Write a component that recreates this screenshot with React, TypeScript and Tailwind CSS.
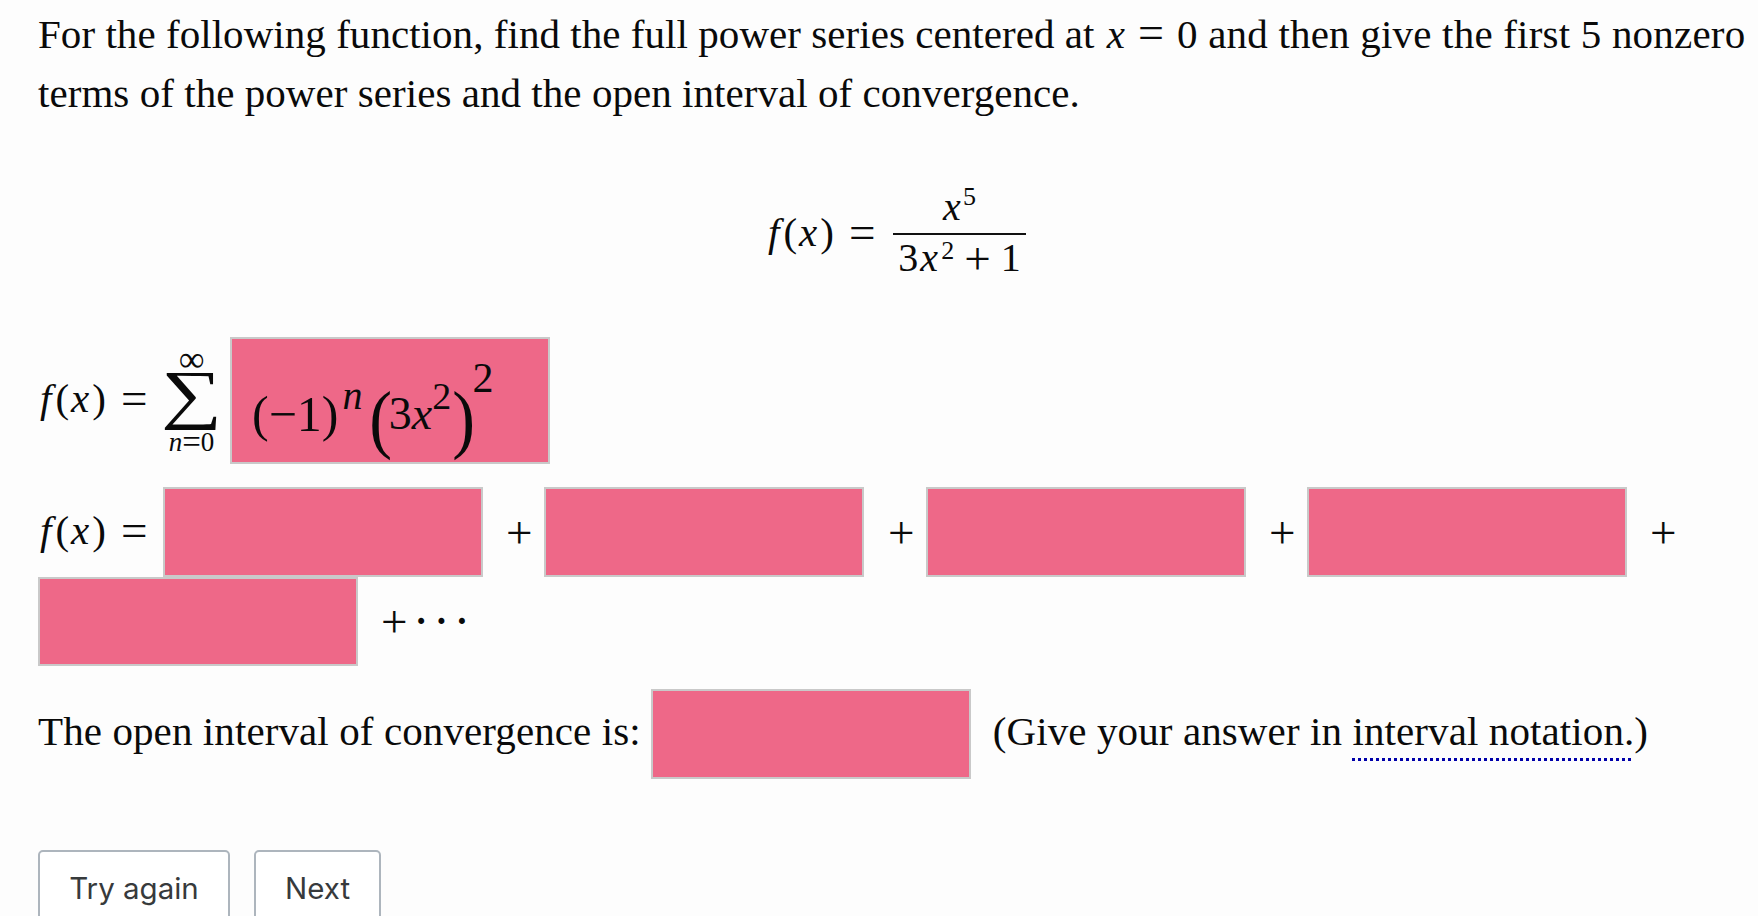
import React from "react";

const Box = ({ className = "", children }: { className?: string; children?: React.ReactNode }) => (
  <div className={`w-[320px] shrink-0 border-2 border-[#c9c9c9] bg-[#ee6888] ${className}`}>{children}</div>
);

const Fx = () => (
  <span className="inline-flex w-[111px] shrink-0 items-center pb-[4px] pl-[2px] text-[41px] leading-none">
    <i className="mr-[4px]">f</i>
    <span className="mr-[2px]">(</span>
    <i className="mr-[3px]">x</i>
    <span>)</span>
    <span className="ml-[15px] text-[47px] leading-none">=</span>
  </span>
);

const Plus = ({ className = "" }: { className?: string }) => (
  <span className={`w-[26px] shrink-0 text-center text-[47px] leading-none ${className}`}>+</span>
);

export default function App() {
  return (
    <div className="h-[916px] w-[1758px] overflow-hidden bg-[#fdfdfd] pl-[38px] pt-[5px] font-['Liberation_Serif',serif] text-[#0a0a0a]">
      <p className="w-[1716px] text-[41px] leading-[59px] tracking-[0.05px]">
        For the following function, find the full power series centered at <i className="ml-[2px]">x</i>
        <span className="mx-[13px] text-[46px] leading-none">=</span>
        <span className="tracking-[0.2px]">0 and then give the first 5 nonzero</span> terms of the power series and the
        open interval of convergence.
      </p>

      <div className="mt-[46px] flex w-[1716px] items-center justify-center">
        <Fx />
        <div className="ml-[16px] flex w-[133px] flex-col items-center">
          <div className="flex h-[64px] items-end pb-[6px] text-[40px] leading-none">
            <i>x</i>
            <span className="mb-[17px] ml-[2px] text-[26px] leading-none">5</span>
          </div>
          <div className="h-[2px] w-full bg-[#111]" />
          <div className="flex h-[64px] items-start pt-[3px] text-[40px] leading-[40px]">
            <span>3</span>
            <i className="ml-[2px]">x</i>
            <span className="-mt-[7px] ml-[3px] text-[26px] leading-[40px]">2</span>
            <span className="ml-[10px] text-[47px] leading-[40px]">+</span>
            <span className="ml-[10px]">1</span>
          </div>
        </div>
      </div>

      <div className="mt-[38px] flex items-center">
        <Fx />
        <div className="ml-[16px] flex w-[53px] flex-col items-center">
          <span className="text-[36px] leading-[20px]">∞</span>
          <span className="-mt-[2px] scale-x-[1.3] text-[66px] leading-[54px]">∑</span>
          <span className="mt-[11px] flex items-center text-[27px] leading-[20px]">
            <i>n</i>
            <span className="text-[33px] leading-[20px]">=</span>0
          </span>
        </div>
        <Box className="ml-[12px] flex h-[127px] items-center pl-[20px]">
          <div className="flex h-[100px] items-center whitespace-nowrap pt-[27px]">
            <span className="text-[50px] leading-none">(−1)</span>
            <i className="mb-[37px] ml-[4px] text-[40px] leading-none">n</i>
            <span className="ml-[5px] mt-[7px] scale-x-90 text-[76px] leading-none">(</span>
            <span className="-ml-[4px] text-[46px] leading-none">3</span>
            <i className="text-[46px] leading-none">x</i>
            <span className="mb-[37px] text-[38px] leading-none">2</span>
            <span className="mt-[7px] scale-x-90 text-[76px] leading-none">)</span>
            <span className="mb-[73px] -ml-[4px] text-[42px] leading-none">2</span>
          </div>
        </Box>
      </div>

      <div className="mt-[23px] flex w-[1716px] flex-wrap items-center">
        <Fx />
        <Box className="ml-[14px] h-[90px]" />
        <Plus className="ml-[23px] mr-[12px]" />
        <Box className="h-[90px]" />
        <Plus className="ml-[24px] mr-[12px]" />
        <Box className="h-[90px]" />
        <Plus className="ml-[23px] mr-[12px]" />
        <Box className="h-[90px]" />
        <Plus className="ml-[23px] mr-[12px]" />
        <Box className="h-[89px]" />
        <Plus className="ml-[23px]" />
        <span className="ml-[8px] flex gap-[8px] text-[37px] font-bold leading-none">
          <span>·</span>
          <span>·</span>
          <span>·</span>
        </span>
      </div>

      <div className="mt-[23px] flex h-[90px] items-center text-[41px] leading-[59px] tracking-[0.1px]">
        <span className="-mt-[6px]">The open interval of convergence is:</span>
        <Box className="ml-[10px] h-[90px]" />
        <span className="-mt-[6px] ml-[22px]">
          (Give your answer in{" "}
          <span className="underline decoration-[#0000aa] decoration-dotted decoration-[3px] underline-offset-[13px]">
            interval notation.
          </span>
          )
        </span>
      </div>

      <div className="mt-[71px] flex gap-[24px] font-['Inter',sans-serif] text-[29.5px] leading-[42px] text-[#373a3c]">
        <button className="h-[76px] w-[192px] rounded-[5px] border-2 border-[#adb5bd] bg-white">Try again</button>
        <button className="h-[76px] w-[127px] rounded-[5px] border-2 border-[#adb5bd] bg-white">Next</button>
      </div>
    </div>
  );
}
